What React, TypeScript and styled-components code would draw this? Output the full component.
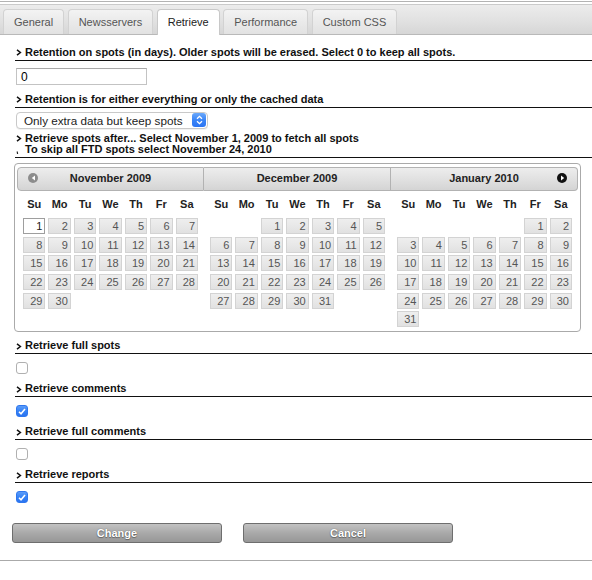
import React from "react";
import styled, { createGlobalStyle } from "styled-components";

const GlobalStyle = createGlobalStyle`
  html, body { margin: 0; padding: 0; background: #fff; }
  body {
    font-family: "Liberation Sans", Arial, Helvetica, sans-serif;
    font-size: 11px;
    color: #111;
  }
  * { box-sizing: border-box; }
`;

const Page = styled.div`
  width: 592px;
  height: 580px;
  overflow: hidden;
  padding-top: 1px;
`;

const Frame = styled.div`
  border-top: 1px solid #b3b3b3;
  border-bottom: 1px solid #aaaaaa;
  padding-bottom: 17px;
`;

const TabBar = styled.div`
  margin-top: 2px;
  height: 31px;
  padding: 4px 3px 0;
  display: flex;
  align-items: flex-end;
  gap: 3.5px;
  border-top: 1px solid #cacaca;
  border-bottom: 1px solid #b9b9b9;
  background: linear-gradient(to bottom, #ececec 0%, #e0e0e0 60%, #d6d6d6 100%);
`;

const Tab = styled.div<{ $active?: boolean }>`
  height: ${(p) => (p.$active ? 26 : 25)}px;
  margin-bottom: ${(p) => (p.$active ? -1 : 0)}px;
  padding: 0 10px ${(p) => (p.$active ? 1 : 0)}px;
  display: flex;
  align-items: center;
  border: 1px solid ${(p) => (p.$active ? "#c8c8c8" : "#d2d2d2")};
  border-bottom: none;
  border-radius: 4px 4px 0 0;
  background: ${(p) =>
    p.$active ? "#ffffff" : "linear-gradient(to bottom, #f3f3f3 0%, #e9e9e9 55%, #e2e2e2 100%)"};
  color: ${(p) => (p.$active ? "#222" : "#555")};
  font-size: 11px;
  white-space: nowrap;
`;

const Content = styled.div`
  padding-left: 15px;
`;

const SectionLabel = styled.div<{ $top: number; $pb?: number }>`
  margin-top: ${(p) => p.$top}px;
  font-weight: bold;
  font-size: 11px;
  line-height: 13px;
  padding-bottom: ${(p) => p.$pb ?? 1}px;
  border-bottom: 1px solid #111;
  color: #111;
  white-space: nowrap;
`;

const LabelLine = styled.div<{ $h: number }>`
  height: ${(p) => p.$h}px;
  line-height: ${(p) => p.$h}px;
`;

const Marker = styled.span`
  display: inline-block;
  width: 10px;
  vertical-align: middle;
  line-height: 0;
  svg { display: block; margin-left: 1px; }
`;

const Chevron = () => (
  <Marker>
    <svg width="6" height="7" viewBox="0 0 6 7">
      <polyline points="1,0.8 4.4,3.5 1,6.2" fill="none" stroke="#111" strokeWidth="1.5" />
    </svg>
  </Marker>
);

const Tick = () => (
  <Marker>
    <svg width="6" height="8" viewBox="0 0 6 8">
      <line x1="1.2" y1="5.5" x2="1.6" y2="8" stroke="#222" strokeWidth="1.2" />
    </svg>
  </Marker>
);

const TextInput = styled.div`
  margin: 7.5px 0 0 1px;
  width: 131px;
  height: 17px;
  padding-left: 4px;
  display: flex;
  align-items: center;
  border: 1px solid #c3c3c3;
  border-top-color: #a9a9a9;
  background: #fff;
  font-size: 12px;
  color: #000;
`;

const Select = styled.div`
  margin: 4px 0 0 1px;
  width: 192px;
  height: 17px;
  padding: 0 1px 0 7px;
  display: flex;
  align-items: center;
  justify-content: space-between;
  border: 1px solid #c9c9c9;
  border-radius: 4px;
  background: #fff;
  font-size: 11.7px;
  color: #222;
  box-shadow: 0 1px 0 rgba(0, 0, 0, 0.05);
`;

const Stepper = styled.span`
  width: 14px;
  height: 14px;
  border-radius: 3px;
  display: flex;
  align-items: center;
  justify-content: center;
  background: linear-gradient(to bottom, #6aa8fb 0%, #3a85f7 50%, #2b74f3 100%);
`;

const Calendar = styled.div`
  margin: 4.5px 0 0 -1px;
  width: 567px;
  padding: 3.5px 2px 0;
  display: flex;
  border: 1px solid #aaaaaa;
  border-radius: 4px;
  background: #fff;
`;

const Group = styled.div`
  flex: 1 1 0;
  min-width: 0;
`;

type Pos = "first" | "middle" | "last";

const GroupHeader = styled.div<{ $pos: Pos }>`
  height: 23.5px;
  display: grid;
  grid-template-columns: 30px 1fr 30px;
  align-items: center;
  border: 1px solid #b2b2b2;
  border-left-width: ${(p) => (p.$pos === "first" ? 1 : 0)}px;
  border-radius: ${(p) =>
    p.$pos === "first" ? "4px 0 0 4px" : p.$pos === "last" ? "0 4px 4px 0" : "0"};
  background: linear-gradient(to bottom, #ededed 0%, #e1e1e1 50%, #d4d4d4 100%);
`;

const Title = styled.div`
  text-align: center;
  font-weight: bold;
  font-size: 11px;
  line-height: 13px;
  margin-top: -1px;
  color: #222;
  white-space: nowrap;
`;

const NavIcon = styled.span<{ $dim?: boolean }>`
  justify-self: center;
  margin-top: -1px;
  width: 10px;
  height: 10px;
  border-radius: 50%;
  background: ${(p) => (p.$dim ? "#8c8c8c" : "#111")};
  display: flex;
  align-items: center;
  justify-content: center;
`;

const WeekRow = styled.div`
  width: 175px;
  height: 27.5px;
  margin: 0 auto;
  display: grid;
  grid-template-columns: repeat(7, 1fr);
  column-gap: 3px;
  align-items: center;
`;

const WeekDay = styled.div`
  text-align: center;
  font-weight: bold;
  font-size: 11px;
  color: #222;
`;

const DayGrid = styled.div`
  width: 175px;
  margin: 0 auto 4px;
  display: grid;
  grid-template-columns: repeat(7, 1fr);
  grid-auto-rows: 16px;
  column-gap: 3px;
  row-gap: 2.7px;
`;

const Day = styled.div<{ $active?: boolean }>`
  height: 16px;
  padding-right: 2px;
  text-align: right;
  font-size: 11px;
  line-height: 14px;
  border: 1px solid ${(p) => (p.$active ? "#9e9e9e" : "#d3d3d3")};
  background: ${(p) =>
    p.$active ? "#ffffff" : "linear-gradient(to bottom, #eeeeee 0%, #e8e8e8 50%, #e1e1e1 100%)"};
  color: ${(p) => (p.$active ? "#212121" : "#555")};
`;

const Empty = styled.div``;

const Check = styled.div<{ $checked?: boolean }>`
  margin: 8.5px 0 0 1px;
  width: 12px;
  height: 12px;
  border-radius: 3px;
  display: flex;
  align-items: center;
  justify-content: center;
  border: 1px solid ${(p) => (p.$checked ? "#2f77ee" : "#b0b0b0")};
  background: ${(p) =>
    p.$checked ? "linear-gradient(to bottom, #5b9cf9 0%, #3683f6 50%, #2a74f1 100%)" : "#fff"};
`;

const ButtonRow = styled.div`
  margin: 20px 0 0 -3px;
  display: flex;
  gap: 21px;
`;

const Button = styled.div`
  width: 210px;
  height: 20px;
  display: flex;
  align-items: center;
  justify-content: center;
  border: 1px solid #6e6e6e;
  border-radius: 3px;
  background: linear-gradient(to bottom, #c2c2c2 0%, #a9a9a9 50%, #979797 100%);
  color: #fff;
  font-weight: bold;
  font-size: 11px;
  text-shadow: 0 0 1px #4a4a4a, 0 1px 1px rgba(0, 0, 0, 0.35);
`;

const weekdays = ["Su", "Mo", "Tu", "We", "Th", "Fr", "Sa"];

const months: { name: string; start: number; days: number; pos: Pos }[] = [
  { name: "November 2009", start: 0, days: 30, pos: "first" },
  { name: "December 2009", start: 2, days: 31, pos: "middle" },
  { name: "January 2010", start: 5, days: 31, pos: "last" },
];

const MonthGroup = ({ m, first }: { m: (typeof months)[number]; first: boolean }) => {
  const cells: React.ReactNode[] = [];
  for (let i = 0; i < m.start; i++) cells.push(<Empty key={"e" + i} />);
  for (let d = 1; d <= m.days; d++)
    cells.push(
      <Day key={d} $active={first && d === 1}>
        {d}
      </Day>
    );
  return (
    <Group>
      <GroupHeader $pos={m.pos}>
        {m.pos === "first" ? (
          <NavIcon $dim>
            <svg width="5" height="6" viewBox="0 0 5 6">
              <polygon points="4,0.5 4,5.5 0.8,3" fill="#fff" />
            </svg>
          </NavIcon>
        ) : (
          <span />
        )}
        <Title>{m.name}</Title>
        {m.pos === "last" ? (
          <NavIcon>
            <svg width="5" height="6" viewBox="0 0 5 6">
              <polygon points="1,0.5 1,5.5 4.2,3" fill="#fff" />
            </svg>
          </NavIcon>
        ) : (
          <span />
        )}
      </GroupHeader>
      <WeekRow>
        {weekdays.map((w) => (
          <WeekDay key={w}>{w}</WeekDay>
        ))}
      </WeekRow>
      <DayGrid>{cells}</DayGrid>
    </Group>
  );
};

const CheckMark = () => (
  <svg width="8" height="7" viewBox="0 0 8 7">
    <polyline points="1,3.8 3,5.8 7,1" fill="none" stroke="#fff" strokeWidth="1.6" />
  </svg>
);

const options = [
  { label: "Retrieve full spots", checked: false },
  { label: "Retrieve comments", checked: true },
  { label: "Retrieve full comments", checked: false },
  { label: "Retrieve reports", checked: true },
];

export default function App() {
  return (
    <>
      <GlobalStyle />
      <Page>
        <Frame>
          <TabBar>
            <Tab>General</Tab>
            <Tab>Newsservers</Tab>
            <Tab $active>Retrieve</Tab>
            <Tab>Performance</Tab>
            <Tab>Custom CSS</Tab>
          </TabBar>
          <Content>
            <SectionLabel $top={10.5}>
              <Chevron />
              Retention on spots (in days). Older spots will be erased. Select 0 to keep all spots.
            </SectionLabel>
            <TextInput>0</TextInput>
            <SectionLabel $top={7.5}>
              <Chevron />
              Retention is for either everything or only the cached data
            </SectionLabel>
            <Select>
              <span>Only extra data but keep spots</span>
              <Stepper>
                <svg width="7" height="10" viewBox="0 0 7 10">
                  <polyline points="1,3.8 3.5,1.3 6,3.8" fill="none" stroke="#fff" strokeWidth="1.3" />
                  <polyline points="1,6.2 3.5,8.7 6,6.2" fill="none" stroke="#fff" strokeWidth="1.3" />
                </svg>
              </Stepper>
            </Select>
            <SectionLabel $top={3} $pb={3.5}>
              <LabelLine $h={12}>
                <Chevron />
                Retrieve spots after... Select November 1, 2009 to fetch all spots
              </LabelLine>
              <LabelLine $h={10}>
                <Tick />
                To skip all FTD spots select November 24, 2010
              </LabelLine>
            </SectionLabel>
            <Calendar>
              {months.map((m, i) => (
                <MonthGroup key={m.name} m={m} first={i === 0} />
              ))}
            </Calendar>
            {options.map((o, i) => (
              <React.Fragment key={o.label}>
                <SectionLabel $top={i === 0 ? 6.5 : 7.5}>
                  <Chevron />
                  {o.label}
                </SectionLabel>
                <Check $checked={o.checked}>{o.checked && <CheckMark />}</Check>
              </React.Fragment>
            ))}
            <ButtonRow>
              <Button>Change</Button>
              <Button>Cancel</Button>
            </ButtonRow>
          </Content>
        </Frame>
      </Page>
    </>
  );
}
